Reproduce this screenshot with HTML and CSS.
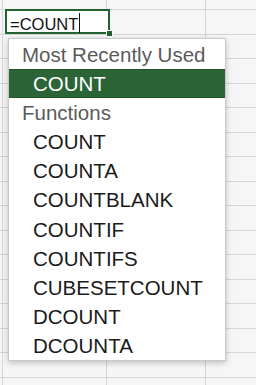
FILE: index.html
```html
<!DOCTYPE html>
<html>
<head>
<meta charset="utf-8">
<link rel="stylesheet" href="styles.css">
</head>
<body>
<div class="sheet">
  <div class="editor"><span class="formula">=COUNT</span><span class="caret"></span><span class="handle"></span></div>
  <div class="menu">
    <div class="group">Most Recently Used</div>
    <div class="item selected">COUNT</div>
    <div class="group">Functions</div>
    <div class="item">COUNT</div>
    <div class="item">COUNTA</div>
    <div class="item">COUNTBLANK</div>
    <div class="item">COUNTIF</div>
    <div class="item">COUNTIFS</div>
    <div class="item">CUBESETCOUNT</div>
    <div class="item">DCOUNT</div>
    <div class="item">DCOUNTA</div>
  </div>
</div>
</body>
</html>
```
FILE: styles.css
```css
html, body {
  margin: 0;
  padding: 0;
}
body {
  width: 256px;
  height: 385px;
  overflow: hidden;
  font-family: "Liberation Sans", Arial, sans-serif;
}
.sheet {
  position: relative;
  width: 256px;
  height: 385px;
  background-color: #f6f6f6;
  background-image:
    linear-gradient(to right, transparent 2px, #d6d6d6 2px, #d6d6d6 3px, transparent 3px),
    linear-gradient(to right, transparent 106px, #d6d6d6 106px, #d6d6d6 107px, transparent 107px),
    linear-gradient(to right, transparent 205px, #d6d6d6 205px, #d6d6d6 206px, transparent 206px),
    repeating-linear-gradient(to bottom, #d6d6d6 0, #d6d6d6 1px, transparent 1px, transparent 24.53px);
  background-position: 0 0, 0 0, 0 0, 0 9px;
  background-repeat: no-repeat, no-repeat, no-repeat, repeat-x;
}
.editor {
  position: absolute;
  left: 5px;
  top: 9px;
  width: 98px;
  height: 21px;
  border: 2px solid #22622f;
  background: #ffffff;
  display: flex;
  align-items: center;
  padding-left: 3px;
  box-sizing: content-box;
}
.formula {
  font-size: 16.5px;
  line-height: 18px;
  color: #111111;
  padding-top: 4px;
}
.caret {
  width: 1px;
  height: 20px;
  background: #111111;
  margin-left: 1px;
  margin-top: 2px;
}
.handle {
  position: absolute;
  right: -5px;
  bottom: -5px;
  width: 5px;
  height: 5px;
  background: #22622f;
  border: 1px solid #ffffff;
}
.menu {
  position: absolute;
  left: 8px;
  top: 38px;
  width: 216px;
  padding-top: 1px;
  background: #ffffff;
  border: 1px solid #c9c9c9;
  box-shadow: 0 2px 6px rgba(0, 0, 0, 0.22);
  display: flex;
  flex-direction: column;
}
.group, .item {
  height: 29.1px;
  line-height: 29px;
  font-size: 20.5px;
  white-space: nowrap;
}
.group {
  color: #5a5a5a;
  padding-left: 13px;
}
.item {
  color: #1a1a1a;
  padding-left: 24px;
}
.item.selected {
  background: #2b6437;
  color: #ffffff;
  box-shadow: inset 0 -1px 0 #1f5229, inset 0 1px 0 #1f5229;
}
```
